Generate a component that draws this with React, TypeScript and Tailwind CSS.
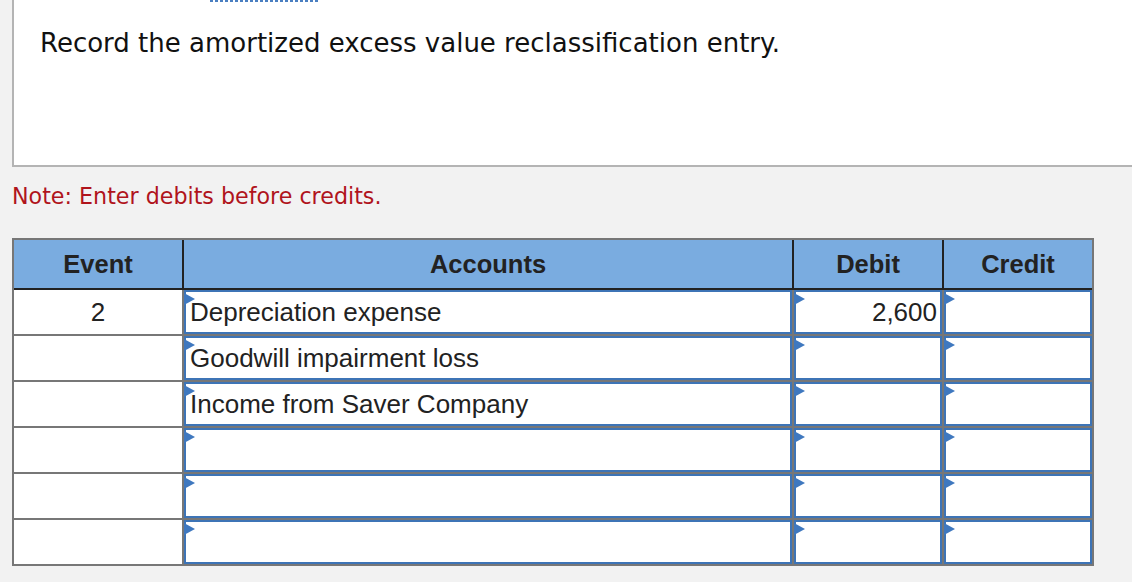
const rows = [
  { event: "2", account: "Depreciation expense", debit: "2,600", credit: "" },
  { event: "", account: "Goodwill impairment loss", debit: "", credit: "" },
  { event: "", account: "Income from Saver Company", debit: "", credit: "" },
  { event: "", account: "", debit: "", credit: "" },
  { event: "", account: "", debit: "", credit: "" },
  { event: "", account: "", debit: "", credit: "" },
];

function Arrow() {
  return (
    <svg className="absolute left-[-2px] top-[1px]" width="11" height="12" viewBox="0 0 11 12">
      <polygon points="0,0 11,6 0,12" fill="#3f78bf" />
    </svg>
  );
}

function InputCell({ value, align = "left", width }: { value: string; align?: "left" | "right"; width: string }) {
  return (
    <div className={`${width} h-[44px] shrink-0`}>
      <div
        className={
          "relative h-full w-full border-2 border-[#3d74b6] bg-white flex items-center text-[26px] text-[#222] " +
          (align === "right" ? "justify-end pr-[3px]" : "pl-[4px]")
        }
      >
        <Arrow />
        <span className="whitespace-nowrap">{value}</span>
      </div>
    </div>
  );
}

export default function App() {
  return (
    <div className="min-h-[582px] w-[1132px] bg-[#f2f2f2] overflow-hidden">
      <div className="ml-[12px] h-[167px] bg-white border-l-2 border-b-2 border-[#b4b4b4] relative">
        <div className="absolute left-[196px] top-0 flex gap-[2px]">
          {Array.from({ length: 22 }).map((_, i) => (
            <span key={i} className="block w-[3px] h-[2px] bg-[#4a7fc1]" />
          ))}
        </div>
        <p className="pl-[26px] pt-[28px] text-[26px] leading-[30px] text-[#111] font-['DejaVu_Sans',Verdana,sans-serif]">
          Record the amortized excess value reclassification entry.
        </p>
      </div>

      <p className="ml-[12px] mt-[16px] text-[22.2px] leading-[26px] text-[#b0141c] font-['DejaVu_Sans',Verdana,sans-serif]">
        Note: Enter debits before credits.
      </p>

      <div className="ml-[12px] mt-[29px] w-[1082px] border-2 border-[#777] font-['Liberation_Sans',Arial,sans-serif]">
        <div className="flex h-[50px] bg-[#7aace0] border-b-2 border-[#222] text-[25.5px] font-bold text-[#222]">
          <div className="w-[170px] border-r-2 border-[#222] flex items-center justify-center">Event</div>
          <div className="w-[610px] border-r-2 border-[#222] flex items-center justify-center">Accounts</div>
          <div className="w-[150px] border-r-2 border-[#222] flex items-center justify-center">Debit</div>
          <div className="w-[148px] flex items-center justify-center">Credit</div>
        </div>
        {rows.map((r, i) => (
          <div key={i} className={"flex bg-[#777] " + (i < rows.length - 1 ? "border-b-2 border-[#777]" : "")}>
            <div className="w-[168px] h-[44px] bg-white flex items-center justify-center text-[26px] text-[#222]">
              {r.event}
            </div>
            <div className="w-[2px]" />
            <InputCell value={r.account} width="w-[608px]" />
            <div className="w-[2px]" />
            <InputCell value={r.debit} align="right" width="w-[148px]" />
            <div className="w-[2px]" />
            <InputCell value={r.credit} width="w-[148px]" />
          </div>
        ))}
      </div>
    </div>
  );
}
